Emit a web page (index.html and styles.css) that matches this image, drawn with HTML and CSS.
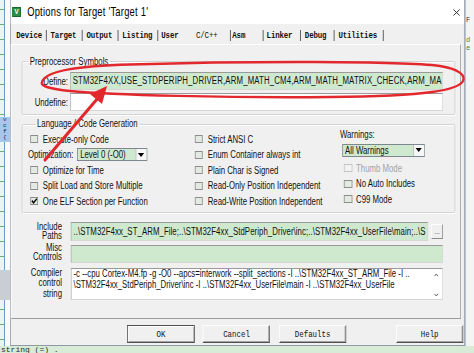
FILE: index.html
```html
<!DOCTYPE html>
<html lang="en">
<head>
    <meta charset="UTF-8">
    <meta name="viewport" content="width=device-width, initial-scale=1.0">
    <title>Options for Target 'Target 1'</title>
    <link rel="stylesheet" href="styles.css">
</head>
<body>
<div class="screen">
    <div class="desk">
        <div class="editor-left">
            <div class="ed-code ed-top"></div>
            <div class="ed-sel">v<br>c<br>f<br>{</div>
            <div class="ed-code ed-mid"></div>
            <div class="ed-gray"></div>
            <div class="ed-code"></div>
        </div>

        <div class="frame">
            <div class="window">
                <div class="titlebar">
                    <span class="app-icon">V</span>
                    <span class="title">Options for Target 'Target 1'</span>
                    <svg class="close" viewBox="0 0 9 7" preserveAspectRatio="none">
                        <line x1="0.5" y1="0.5" x2="8.5" y2="6.5" stroke="#222" stroke-width="1"/>
                        <line x1="8.5" y1="0.5" x2="0.5" y2="6.5" stroke="#222" stroke-width="1"/>
                    </svg>
                </div>

                <div class="tabs">
                    <span class="tab tab-device">Device</span>
                    <span class="tab tab-target">Target</span>
                    <span class="tab tab-output">Output</span>
                    <span class="tab tab-listing">Listing</span>
                    <span class="tab tab-user">User</span>
                    <span class="tab tab-cc active">C/C++</span>
                    <span class="tab tab-asm">Asm</span>
                    <span class="tab tab-linker">Linker</span>
                    <span class="tab tab-debug">Debug</span>
                    <span class="tab tab-util">Utilities</span>
                </div>

                <div class="panel">
                    <fieldset class="group group-pre">
                        <legend>Preprocessor Symbols</legend>
                        <div class="sym-row">
                            <label>Define:</label>
                            <div class="field green">STM32F4XX,USE_STDPERIPH_DRIVER,ARM_MATH_CM4,ARM_MATH_MATRIX_CHECK,ARM_MA</div>
                        </div>
                        <div class="sym-row">
                            <label>Undefine:</label>
                            <div class="field"></div>
                        </div>
                    </fieldset>

                    <fieldset class="group group-lang">
                        <legend>Language / Code Generation</legend>
                        <div class="lang-cols">
                            <div class="col col-1">
                                <div class="check"><span class="box"></span>Execute-only Code</div>
                                <div class="opt-row">
                                    <span class="opt-label">Optimization:</span>
                                    <div class="combo combo-opt">
                                        <span class="combo-text">Level 0 (-O0)</span>
                                        <span class="combo-btn"></span>
                                    </div>
                                </div>
                                <div class="check"><span class="box"></span>Optimize for Time</div>
                                <div class="check"><span class="box"></span>Split Load and Store Multiple</div>
                                <div class="check">
                                    <span class="box">
                                        <svg viewBox="0 0 8 6" preserveAspectRatio="none"><polyline points="1,2.6 3,4.8 7,0.8" fill="none" stroke="#000" stroke-width="1.6"/></svg>
                                    </span>One ELF Section per Function
                                </div>
                            </div>
                            <div class="col col-2">
                                <div class="check"><span class="box"></span>Strict ANSI C</div>
                                <div class="check"><span class="box"></span>Enum Container always int</div>
                                <div class="check"><span class="box"></span>Plain Char is Signed</div>
                                <div class="check"><span class="box"></span>Read-Only Position Independent</div>
                                <div class="check"><span class="box"></span>Read-Write Position Independent</div>
                            </div>
                            <div class="col col-3">
                                <div class="warn-label">Warnings:</div>
                                <div class="combo combo-warn">
                                    <span class="combo-text">All Warnings</span>
                                    <span class="combo-btn"></span>
                                </div>
                                <div class="check disabled"><span class="box"></span>Thumb Mode</div>
                                <div class="check"><span class="box"></span>No Auto Includes</div>
                                <div class="check"><span class="box"></span>C99 Mode</div>
                            </div>
                        </div>
                    </fieldset>

                    <div class="paths">
                        <div class="path-row row-include">
                            <label>Include<br>Paths</label>
                            <div class="field green">..\STM32F4xx_ST_ARM_File;..\STM32F4xx_StdPeriph_Driver\inc;..\STM32F4xx_UserFile\main;..\S</div>
                            <span class="browse">...</span>
                        </div>
                        <div class="path-row row-misc">
                            <label>Misc<br>Controls</label>
                            <div class="field green"></div>
                        </div>
                        <div class="path-row row-compiler">
                            <label>Compiler<br>control<br>string</label>
                            <div class="field multi">
                                <div class="multi-text">
                                    <div>-c --cpu Cortex-M4.fp -g -O0 --apcs=interwork --split_sections -I ..\STM32F4xx_ST_ARM_File -I ..</div>
                                    <div>\STM32F4xx_StdPeriph_Driver\inc -I ..\STM32F4xx_UserFile\main -I ..\STM32F4xx_UserFile</div>
                                </div>
                                <div class="vscroll">
                                    <svg viewBox="0 0 6 4"><polyline points="0.8,3.2 3,1 5.2,3.2" fill="none" stroke="#555" stroke-width="1"/></svg>
                                    <svg viewBox="0 0 6 4"><polyline points="0.8,0.8 3,3 5.2,0.8" fill="none" stroke="#555" stroke-width="1"/></svg>
                                </div>
                            </div>
                        </div>
                    </div>
                </div>

                <div class="buttons">
                    <span class="btn btn-default">OK</span>
                    <span class="btn">Cancel</span>
                    <span class="btn btn-defaults">Defaults</span>
                    <span class="btn btn-help">Help</span>
                </div>
            </div>
        </div>

        <div class="editor-right">
            <div class="ed-r-top">F</div>
            <div class="ed-r-green">d<br>e</div>
        </div>
    </div>
    <div class="editor-bottom">string (=) .</div>

    <!-- red marks drawn over the screenshot -->
    <svg class="marks" width="474" height="353" viewBox="0 0 474 353">
        <path d="M42,82 C46,70 80,66 130,64.5 C250,61 400,61 440,66 C458,69 466,75 463,81 C458,90 430,96 330,97 C230,98 110,95 70,91 C50,89 40,86 42,82 Z"
              fill="none" stroke="#e2282d" stroke-width="2.4"/>
        <line x1="45" y1="160" x2="98" y2="98" stroke="#e2282d" stroke-width="3" stroke-linecap="round"/>
        <polygon points="107,86 102,104 90,94" fill="#e2282d"/>
    </svg>
</div>
</body>
</html>
```

FILE: styles.css
```css
html, body {
    margin: 0;
    padding: 0;
}
body {
    width: 474px;
    height: 353px;
    overflow: hidden;
    background: #d8ebd6;
    font-family: "Liberation Sans", Arial, sans-serif;
    font-size: 10px;
    color: #111;
}
.screen {
    position: relative;
    width: 474px;
    height: 353px;
}
.desk {
    display: flex;
    height: 346px;
}

/* editor showing behind the dialog */
.editor-left {
    width: 10px;
    flex: none;
    display: flex;
    flex-direction: column;
    background: linear-gradient(to right, #eef3ee 0 4px, #6d98cf 4px 5px, #fafafa 5px);
}
.ed-code {
    flex: 1;
    background-image: repeating-linear-gradient(to bottom, transparent 0 9px, #6fae6f 9px 10px, transparent 10px 15px);
    background-size: 4px 100%;
    background-repeat: no-repeat;
}
.ed-top {
    flex: none;
    height: 117px;
}
.ed-sel {
    height: 25px;
    background: #a6c6ec;
    color: #1b2b4a;
    font-family: "Liberation Mono", monospace;
    font-size: 6px;
    line-height: 6px;
    padding-left: 3px;
    overflow: hidden;
}
.ed-mid {
    flex: none;
    height: 128px;
}
.ed-gray {
    height: 30px;
    background: #c9ced4;
}
.editor-right {
    width: 9px;
    flex: none;
    background: #f3f4f3;
    border-left: 1px solid #b9c3cf;
    box-sizing: border-box;
    font-family: "Liberation Mono", monospace;
    font-size: 7px;
    line-height: 8px;
    overflow: hidden;
}
.ed-r-top {
    margin-top: 16px;
    color: #333;
}
.ed-r-green {
    margin-top: 12px;
    color: #2f8f3f;
}
.editor-bottom {
    height: 7px;
    font-family: "Liberation Mono", monospace;
    font-size: 8px;
    line-height: 7px;
    color: #2b2b2b;
    padding-left: 1px;
    overflow: hidden;
    white-space: nowrap;
}

/* dialog: laid out wide, then squeezed like the screenshot */
.frame {
    width: 455px;
    flex: none;
}
.window {
    width: 583px;
    height: 346px;
    box-sizing: border-box;
    transform: scaleX(0.78);
    transform-origin: 0 0;
    background: #f0f0f0;
    border: 1px solid #8d99a8;
    border-top: none;
}
.titlebar {
    height: 24px;
    background: #fff;
    display: flex;
    align-items: center;
}
.app-icon {
    width: 11px;
    height: 10px;
    margin-left: 2px;
    box-sizing: border-box;
    background: #2c8f3f;
    border: 1px solid #17672a;
    color: #fff;
    font-size: 8px;
    font-weight: bold;
    line-height: 8px;
    text-align: center;
}
.title {
    margin-left: 8px;
    font-size: 12px;
    letter-spacing: 0.3px;
    color: #000;
}
.close {
    margin-left: auto;
    margin-right: 5px;
    width: 9px;
    height: 7px;
}

.tabs {
    display: flex;
    align-items: center;
    height: 18px;
    margin-top: 2px;
    padding-left: 2px;
    font-family: "Liberation Mono", "Courier New", monospace;
    font-weight: bold;
    font-size: 9.5px;
    letter-spacing: -0.2px;
    color: #111;
}
.tab {
    box-sizing: border-box;
    height: 11px;
    line-height: 11px;
    padding-left: 5px;
    border-right: 1px solid #3c3c3c;
    white-space: nowrap;
}
.tab-device { width: 44px; }
.tab-target { width: 46px; }
.tab-output { width: 46px; }
.tab-listing { width: 51px; }
.tab-user { width: 29px; border-right: none; padding-left: 4px; }
.tab-cc { width: 64px; padding-left: 19.5px; font-weight: normal; }
.tab-asm { width: 42px; padding-left: 2px; }
.tab-linker { width: 48px; padding-left: 4px; }
.tab-debug { width: 43px; }
.tab-util { width: 63px; }

.panel {
    height: 275px;
    box-sizing: border-box;
    margin-right: 4px;
    border: 1px solid;
    border-color: #fff #9c9c9c #9c9c9c #fff;
    padding: 10.5px 6.5px 0 13.4px;
}
.group {
    margin: 0;
    min-width: 0;
    border: 1px solid #cfcfcf;
    border-radius: 2px;
    box-shadow: inset 1px 1px 0 #fff, 1px 1px 0 #fff;
}
.group legend {
    margin-left: 7px;
    padding: 0 2px;
    line-height: 12px;
    font-size: 10px;
}
.group-pre {
    padding: 4.5px 14.5px 3px 0;
}
.sym-row {
    display: flex;
    align-items: center;
    height: 18px;
}
.sym-row + .sym-row {
    margin-top: 3px;
}
.sym-row label {
    width: 58px;
    margin-right: 2.6px;
    text-align: right;
}
.field {
    flex: 1;
    min-width: 0;
    height: 18px;
    box-sizing: border-box;
    border: 1px solid;
    border-color: #9a9a9a #d6d6d6 #d6d6d6 #b3b3b3;
    background: #fff;
    padding-left: 2.4px;
    line-height: 16px;
    letter-spacing: 0.2px;
    white-space: nowrap;
    overflow: hidden;
}
.green {
    background: #cfe9cf;
}

.group-lang {
    margin-top: 3.3px;
    padding: 1px 0 3.2px 9.2px;
}
.lang-cols {
    display: flex;
}
.col-1 { width: 211.4px; }
.col-2 { width: 186px; }
.col-3 { flex: 1; }
.check {
    display: flex;
    align-items: center;
    height: 15.5px;
    white-space: nowrap;
}
.box {
    flex: none;
    width: 10.5px;
    height: 8px;
    box-sizing: border-box;
    margin-right: 6px;
    border: 1px solid #8c8c8c;
    background: #e2eae2;
    display: flex;
}
.box svg {
    width: 100%;
    height: 100%;
}
.check.disabled {
    color: #a3a3a3;
}
.check.disabled .box {
    border-color: #c4c4c4;
    background: #f2f2f2;
}
.opt-row {
    display: flex;
    align-items: center;
    height: 15.5px;
    margin-left: -2.6px;
}
.opt-label {
    width: 63px;
}
.combo {
    display: flex;
    align-items: center;
    height: 13px;
    box-sizing: border-box;
    border: 1px solid #7f868f;
    background: #cfe9cf;
}
.combo-opt { width: 89.6px; }
.combo-text {
    flex: 1;
    padding-left: 3px;
    line-height: 11px;
    white-space: nowrap;
}
.combo-btn {
    width: 14px;
    height: 11px;
    box-sizing: border-box;
    background: #f7f7f7;
    border-left: 1px solid #b2b2b2;
    display: flex;
    align-items: center;
    justify-content: center;
}
.combo-btn::after {
    content: "";
    border-left: 4px solid transparent;
    border-right: 4px solid transparent;
    border-top: 4px solid #000;
}
.warn-label {
    line-height: 10px;
    margin-top: -1px;
}
.combo-warn {
    width: 106.4px;
    margin: 3.5px 0 3.5px 2.6px;
}
.col-3 .check {
    margin-left: 5.2px;
}
.col-3 .box {
    margin-right: 5px;
}

.paths {
    margin: 9px 15.5px 0 0;
}
.path-row {
    display: flex;
}
.path-row label {
    width: 51.3px;
    margin-right: 11.3px;
    text-align: right;
    line-height: 9.5px;
}
.row-include {
    height: 19px;
    align-items: center;
}
.row-include .field {
    height: 19px;
    line-height: 17px;
    letter-spacing: 0.1px;
}
.row-include label {
    align-self: flex-start;
}
.browse {
    width: 15px;
    height: 15px;
    margin-left: 4px;
    box-sizing: border-box;
    border: 1px solid;
    border-color: #fff #8a8a8a #8a8a8a #fff;
    background: #efefef;
    font-size: 8px;
    line-height: 14px;
    text-align: center;
    color: #333;
}
.row-misc {
    margin-top: 4px;
}
.row-misc label {
    margin-top: -2px;
}
.row-compiler {
    margin-top: 5px;
}
.row-compiler label {
    line-height: 10.5px;
}
.field.multi {
    height: 32px;
    display: flex;
    white-space: normal;
    padding-left: 0;
    letter-spacing: 0;
}
.multi-text {
    flex: 1;
    min-width: 0;
    padding-left: 2.4px;
    line-height: 10.7px;
    white-space: nowrap;
    overflow: hidden;
}
.vscroll {
    width: 15px;
    display: flex;
    flex-direction: column;
    justify-content: space-between;
    align-items: center;
    padding: 4px 0 2px;
}
.vscroll svg {
    width: 7px;
    height: 4px;
}

.buttons {
    display: flex;
    gap: 10.4px;
    margin-top: 6px;
    padding: 0 1px 0 149px;
}
.btn {
    width: 86px;
    height: 18px;
    box-sizing: border-box;
    border: 1px solid;
    border-color: #fff #4f4f4f #4f4f4f #fff;
    box-shadow: inset -1px -1px 0 #a3a3a3;
    background: #f0f0f0;
    display: flex;
    align-items: center;
    justify-content: center;
    font-family: "Liberation Mono", "Courier New", monospace;
    font-size: 9.5px;
    color: #111;
}
.btn-default {
    width: 87px;
    border-color: #505050;
    box-shadow: inset 1px 1px 0 #fff, inset -1px -1px 0 #a3a3a3;
}
.btn-defaults {
    margin-left: 1.2px;
}
.btn-help {
    margin-left: auto;
}

.marks {
    position: absolute;
    left: 0;
    top: 0;
    pointer-events: none;
}
```
